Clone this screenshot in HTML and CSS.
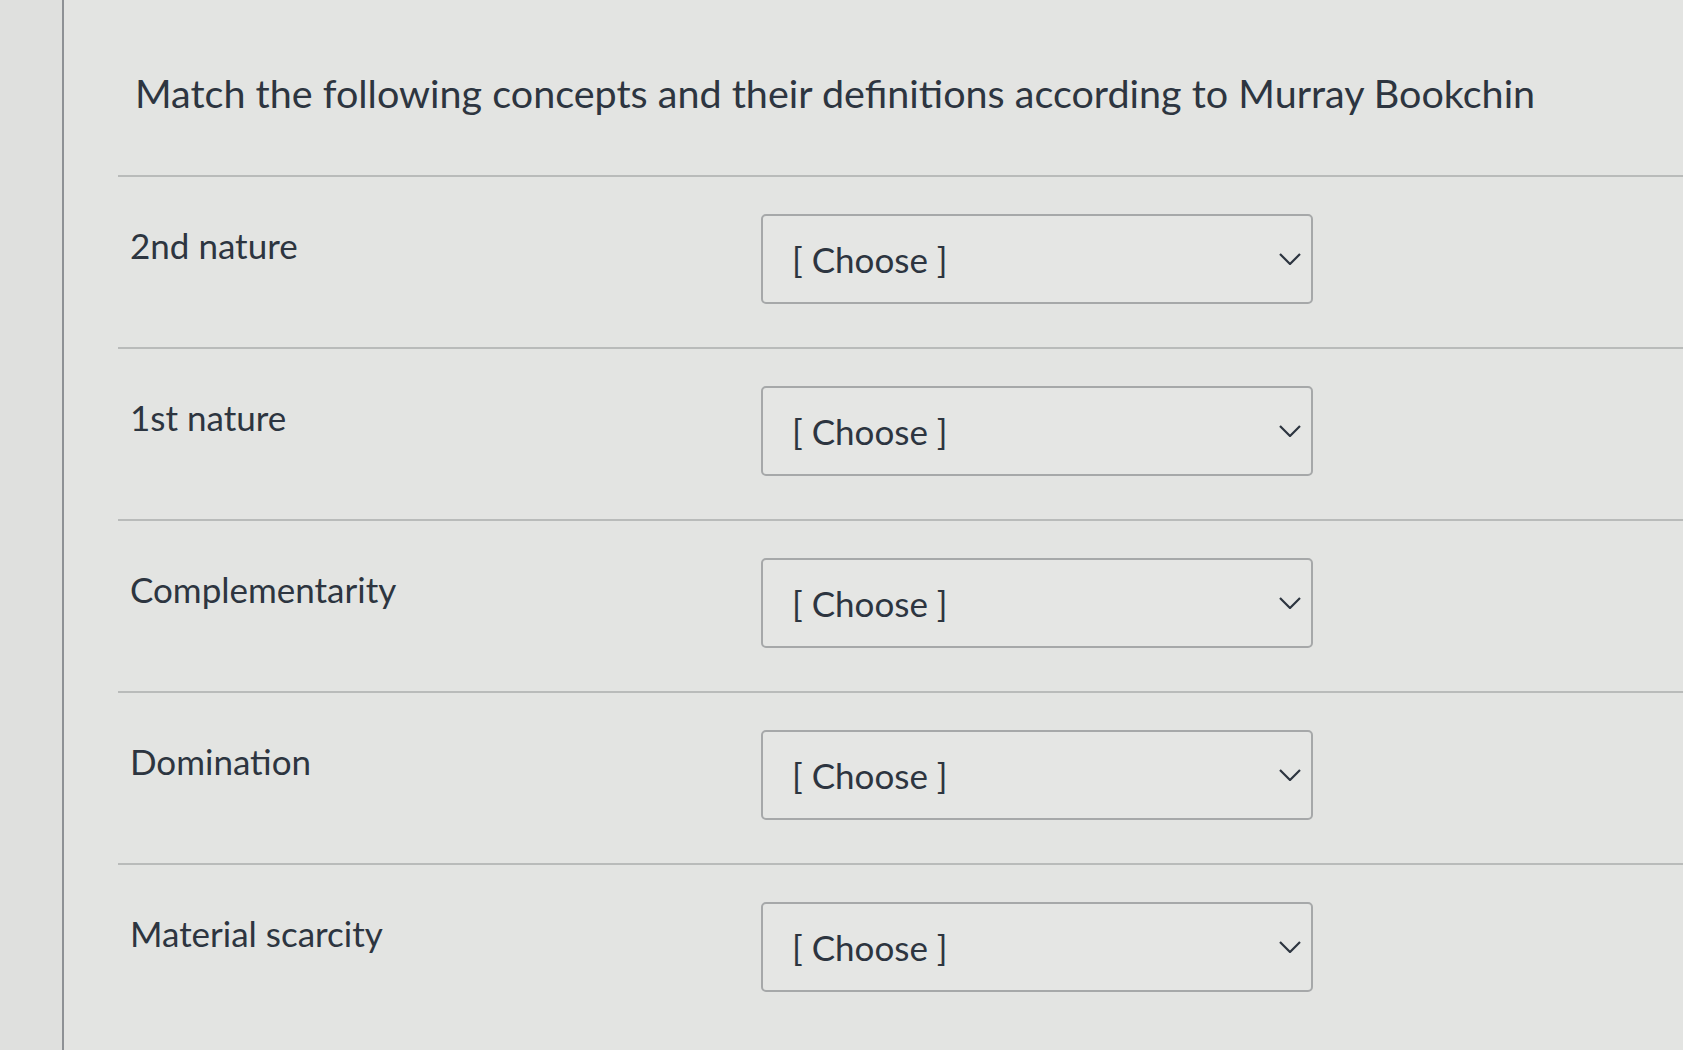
FILE: index.html
```html
<!DOCTYPE html>
<html lang="en">
<head>
    <meta charset="UTF-8">
    <meta name="viewport" content="width=device-width, initial-scale=1.0">
    <title>Matching Question</title>
    <link rel="stylesheet" href="styles.css">
</head>
<body>

<div class="page">
    <aside class="gutter"></aside>

    <main class="question">
        <h1 class="question-text">Match the following concepts and their definitions according to Murray Bookchin</h1>

        <div class="answers">
            <div class="answer-row">
                <label class="answer-label">2nd nature</label>
                <div class="select-wrap">
                    <select class="answer-select">
                        <option>[ Choose ]</option>
                    </select>
                    <svg class="chevron" viewBox="0 0 22 12"><path d="M1 1 L11 11 L21 1"/></svg>
                </div>
            </div>
            <div class="answer-row">
                <label class="answer-label">1st nature</label>
                <div class="select-wrap">
                    <select class="answer-select">
                        <option>[ Choose ]</option>
                    </select>
                    <svg class="chevron" viewBox="0 0 22 12"><path d="M1 1 L11 11 L21 1"/></svg>
                </div>
            </div>
            <div class="answer-row">
                <label class="answer-label">Complementarity</label>
                <div class="select-wrap">
                    <select class="answer-select">
                        <option>[ Choose ]</option>
                    </select>
                    <svg class="chevron" viewBox="0 0 22 12"><path d="M1 1 L11 11 L21 1"/></svg>
                </div>
            </div>
            <div class="answer-row">
                <label class="answer-label">Domination</label>
                <div class="select-wrap">
                    <select class="answer-select">
                        <option>[ Choose ]</option>
                    </select>
                    <svg class="chevron" viewBox="0 0 22 12"><path d="M1 1 L11 11 L21 1"/></svg>
                </div>
            </div>
            <div class="answer-row">
                <label class="answer-label">Material scarcity</label>
                <div class="select-wrap">
                    <select class="answer-select">
                        <option>[ Choose ]</option>
                    </select>
                    <svg class="chevron" viewBox="0 0 22 12"><path d="M1 1 L11 11 L21 1"/></svg>
                </div>
            </div>
        </div>
    </main>
</div>

</body>
</html>
```

FILE: styles.css
```css
* {
    margin: 0;
    padding: 0;
    box-sizing: border-box;
}

html, body {
    width: 100%;
    height: 100%;
    overflow: hidden;
    background-color: #e3e4e2;
    color: #2d3540;
    font-family: Lato, "Open Sans", sans-serif;
}

.page {
    display: flex;
    height: 100%;
}

.gutter {
    width: 64px;
    flex-shrink: 0;
    background-color: #dfe0de;
    border-right: 2px solid #8e9195;
}

.question {
    flex: 1;
    padding: 70px 0 0 54px;
}

.question-text {
    font-weight: 400;
    font-size: 39.5px;
    line-height: 46px;
    padding-left: 17px;
    margin-bottom: 59px;
}

.answer-row {
    display: flex;
    align-items: flex-start;
    border-top: 2px solid #b9bbba;
    padding: 37px 0 43px 0;
}

.answer-label {
    width: 643px;
    flex-shrink: 0;
    padding: 11px 0 0 12px;
    font-size: 35px;
    line-height: 40px;
}

.select-wrap {
    position: relative;
    width: 552px;
}

.answer-select {
    appearance: none;
    -webkit-appearance: none;
    width: 100%;
    height: 90px;
    padding: 0 60px 0 29px;
    border: 2px solid #a6a8a9;
    border-radius: 5px;
    background-color: #e5e6e4;
    color: #2d3540;
    font-family: Lato, "Open Sans", sans-serif;
    font-size: 35px;
}

.chevron {
    position: absolute;
    top: 39px;
    right: 12px;
    width: 22px;
    height: 12px;
    fill: none;
    stroke: #2d3540;
    stroke-width: 2.2;
    pointer-events: none;
}
```
